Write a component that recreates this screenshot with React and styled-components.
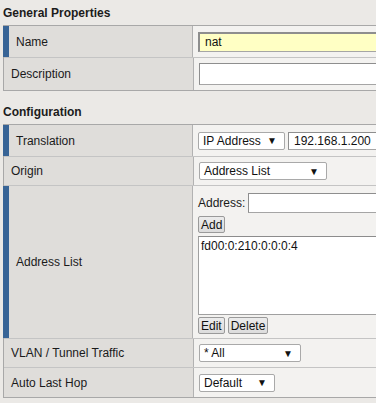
import React from 'react';
import styled, { createGlobalStyle } from 'styled-components';

const GlobalStyle = createGlobalStyle`
  html, body {
    margin: 0;
    padding: 0;
    background: #ebe9e6;
    overflow: hidden;
  }
  body {
    font-family: 'Liberation Sans', Arial, sans-serif;
    font-size: 12px;
    color: #1a1a1a;
  }
`;

const Page = styled.div`
  width: 376px;
  height: 403px;
  overflow: hidden;
  padding-left: 3px;
  box-sizing: border-box;
`;

const SectionTitle = styled.div`
  font-weight: bold;
  font-size: 12px;
  height: ${p => p.$h}px;
  display: flex;
  align-items: flex-end;
  padding-bottom: 5px;
  box-sizing: border-box;
  color: #1c1c1c;
  white-space: nowrap;
`;

const Table = styled.div`
  width: 520px;
  border-top: 1px solid #a8a8a8;
  border-left: 1px solid #a8a8a8;
  border-bottom: 1px solid #a8a8a8;
  background: #f3f2f0;
`;

const Row = styled.div`
  display: flex;
  box-sizing: border-box;
  height: ${p => p.$h}px;
  & + & {
    border-top: 1px solid #c4c4c4;
  }
`;

const Label = styled.div`
  width: 190px;
  flex-shrink: 0;
  box-sizing: border-box;
  background: #dfddda;
  border-right: 1px solid #b2b2b2;
  display: flex;
  align-items: center;
  padding-left: 7px;
  margin-left: ${p => (p.$required ? '-1px' : '0')};
  border-left: ${p => (p.$required ? '6px solid #386496' : '0')};
  white-space: nowrap;
`;

const Value = styled.div`
  flex: 1;
  display: flex;
  flex-direction: ${p => (p.$column ? 'column' : 'row')};
  align-items: ${p => (p.$column ? 'flex-start' : 'center')};
  gap: 3px;
  padding: ${p => (p.$column ? '7px 5px 0 5px' : '0 5px')};
  box-sizing: border-box;
`;

const TextInput = styled.input`
  font-family: 'Liberation Sans', Arial, sans-serif;
  font-size: 12px;
  color: #111;
  width: ${p => p.$w}px;
  height: ${p => p.$h || 20}px;
  box-sizing: border-box;
  padding: 0 0 0 5px;
  margin: 0;
  border: 1px solid #a5a5a5;
  border-top-color: #8e8e8e;
  border-left-color: #8e8e8e;
  background: ${p => (p.$focus ? '#ffffc4' : '#ffffff')};
  border-width: ${p => (p.$focus ? '2px 1px 1px 2px' : '1px')};
  outline: none;
  flex-shrink: 0;
`;

const Select = styled.div`
  width: ${p => p.$w}px;
  height: 18px;
  box-sizing: border-box;
  background: #ffffff;
  border: 1px solid #a9a9a9;
  border-radius: 2px;
  display: flex;
  align-items: center;
  justify-content: space-between;
  padding: 0 7px 0 4px;
  font-size: 12px;
  color: #111;
  white-space: nowrap;
  flex-shrink: 0;
`;

const Arrow = styled.span`
  font-size: 10px;
  color: #111;
`;

const FieldLine = styled.div`
  display: flex;
  align-items: center;
  gap: 3px;
  white-space: nowrap;
`;

const Button = styled.button`
  font-family: 'Liberation Sans', Arial, sans-serif;
  font-size: 12px;
  color: #111;
  height: 17px;
  padding: 0 2px;
  margin: 0;
  background: linear-gradient(#ececec, #dcdcdc);
  border: 1px solid #9a9a9a;
  border-radius: 2px;
  line-height: 14px;
`;

const ButtonBar = styled.div`
  display: flex;
  gap: 3px;
  margin-top: -1px;
`;

const ListBox = styled.div`
  width: 300px;
  height: 79px;
  box-sizing: border-box;
  background: #ffffff;
  border: 1px solid #a0a0a0;
  border-top-color: #8c8c8c;
  padding: 2px 2px;
  font-size: 12px;
  color: #111;
`;

export default function App() {
  return (
    <Page>
      <GlobalStyle />
      <SectionTitle $h={25}>General Properties</SectionTitle>
      <Table>
        <Row $h={31}>
          <Label $required>Name</Label>
          <Value>
            <TextInput $w={320} $focus defaultValue="nat" />
          </Value>
        </Row>
        <Row $h={33}>
          <Label>Description</Label>
          <Value>
            <TextInput $w={320} $h={22} defaultValue="" />
          </Value>
        </Row>
      </Table>

      <SectionTitle $h={33}>Configuration</SectionTitle>
      <Table>
        <Row $h={31}>
          <Label $required>Translation</Label>
          <Value>
            <Select $w={87}>
              IP Address <Arrow>▼</Arrow>
            </Select>
            <TextInput $w={160} $h={18} defaultValue="192.168.1.200" />
          </Value>
        </Row>
        <Row $h={29}>
          <Label>Origin</Label>
          <Value>
            <Select $w={128}>
              Address List <Arrow>▼</Arrow>
            </Select>
          </Value>
        </Row>
        <Row $h={153}>
          <Label $required>Address List</Label>
          <Value $column>
            <FieldLine>
              Address:
              <TextInput $w={200} defaultValue="" />
            </FieldLine>
            <Button>Add</Button>
            <ListBox>fd00:0:210:0:0:0:4</ListBox>
            <ButtonBar>
              <Button>Edit</Button>
              <Button>Delete</Button>
            </ButtonBar>
          </Value>
        </Row>
        <Row $h={29}>
          <Label>VLAN / Tunnel Traffic</Label>
          <Value>
            <Select $w={102}>
              * All <Arrow>▼</Arrow>
            </Select>
          </Value>
        </Row>
        <Row $h={30}>
          <Label>Auto Last Hop</Label>
          <Value>
            <Select $w={76}>
              Default <Arrow>▼</Arrow>
            </Select>
          </Value>
        </Row>
      </Table>
    </Page>
  );
}
